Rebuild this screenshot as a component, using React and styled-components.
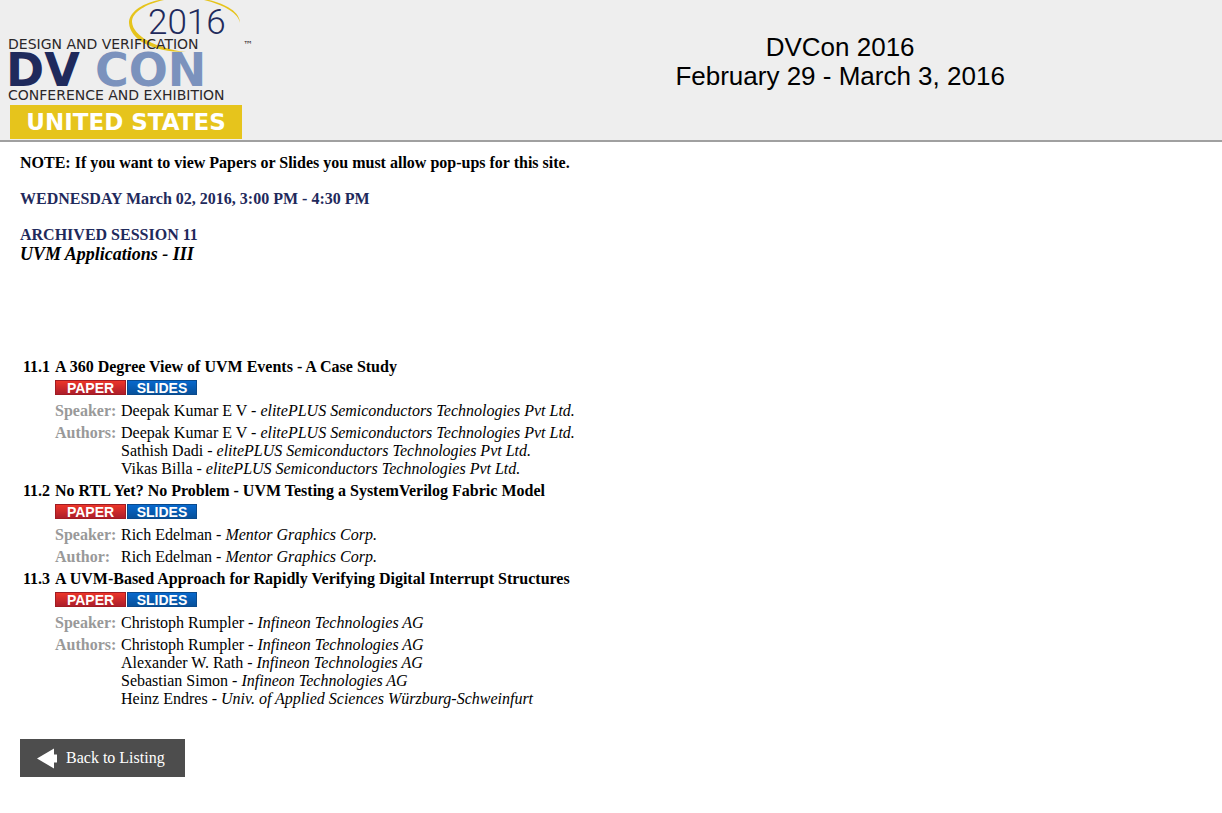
import React from 'react';
import styled, { createGlobalStyle } from 'styled-components';

const GlobalStyle = createGlobalStyle`
  body {
    margin: 0;
    background-color: #fff;
    color: #000;
    font-family: 'Liberation Serif', 'Times New Roman', serif;
    font-size: 16px;
    line-height: 18px;
  }
`;

const Header = styled.header`
  display: grid;
  grid-template-columns: 3fr 5fr;
  background-color: #eee;
  border-bottom: 2px solid #a0a0a0;
`;

const Logo = styled.svg`
  display: block;
  width: 260px;
  height: 140px;
`;

const HeaderTitle = styled.h1`
  margin: 0;
  padding-top: 33px;
  text-align: center;
  font-family: 'Liberation Sans', Arial, sans-serif;
  font-size: 26px;
  font-weight: normal;
  line-height: 29px;
`;

const Content = styled.main`
  padding: 12px 20px 36px;
`;

const Note = styled.p`
  margin: 0 0 18px;
  font-weight: bold;
`;

const SessionLine = styled.h2`
  margin: 0;
  padding-bottom: ${props => props.$spaced ? '18px' : '0'};
  color: #1f2a5c;
  font-size: 16px;
`;

const SessionTitle = styled.h3`
  margin: 0 0 92px;
  font-size: 18px;
  font-style: italic;
  line-height: 20px;
`;

const PaperTable = styled.table`
  border-collapse: collapse;
`;

const Cell = styled.td`
  padding: 2px 0;
  vertical-align: top;
  text-align: left;
`;

const NumberCell = styled(Cell)`
  min-width: 32px;
  padding-left: 3px;
  font-weight: bold;
`;

const TitleCell = styled(Cell)`
  font-weight: bold;
`;

const LabelCell = styled(Cell)`
  min-width: 66px;
  color: #999;
  font-weight: bold;
`;

const Badges = styled.div`
  display: flex;
  gap: 1px;
  height: 18px;
`;

const Badge = styled.a`
  box-sizing: border-box;
  width: ${props => props.$slides ? '70px' : '71px'};
  height: 15px;
  border: 1px solid ${props => props.$slides ? '#0a4a8c' : '#a01c22'};
  background: ${props => props.$slides
    ? 'linear-gradient(#0868cc, #07519b)'
    : 'linear-gradient(#ec3529, #ad1e2b)'};
  color: #fff;
  font-family: 'Liberation Sans', Arial, sans-serif;
  font-size: 14px;
  font-weight: bold;
  line-height: 14px;
  text-align: center;
  text-decoration: none;
`;

const BackLink = styled.a`
  display: inline-flex;
  align-items: center;
  gap: 8px;
  margin-top: 29px;
  padding: 10px 20px 10px 17px;
  background-color: #4d4d4d;
  color: #fff;
  text-decoration: none;
`;

const BackArrow = styled.svg`
  width: 21px;
  height: 18px;
  overflow: visible;
`;

const elite = 'elitePLUS Semiconductors Technologies Pvt Ltd.';
const mentor = 'Mentor Graphics Corp.';
const infineon = 'Infineon Technologies AG';

const papers = [
  {
    id: '11.1',
    title: 'A 360 Degree View of UVM Events - A Case Study',
    speaker: ['Deepak Kumar E V', elite],
    authors: [
      ['Deepak Kumar E V', elite],
      ['Sathish Dadi', elite],
      ['Vikas Billa', elite],
    ],
  },
  {
    id: '11.2',
    title: 'No RTL Yet? No Problem - UVM Testing a SystemVerilog Fabric Model',
    speaker: ['Rich Edelman', mentor],
    authors: [['Rich Edelman', mentor]],
  },
  {
    id: '11.3',
    title: 'A UVM-Based Approach for Rapidly Verifying Digital Interrupt Structures',
    speaker: ['Christoph Rumpler', infineon],
    authors: [
      ['Christoph Rumpler', infineon],
      ['Alexander W. Rath', infineon],
      ['Sebastian Simon', infineon],
      ['Heinz Endres', 'Univ. of Applied Sciences Würzburg-Schweinfurt'],
    ],
  },
];

const DvconLogo = () => (
  <Logo viewBox="0 0 260 140" role="img" aria-label="DVCon 2016 United States">
    <path
      d="M159 0 C140 4 129 13 129 23 C130 39 151 52 186 52 C155 48 133 36 132 22 C132 12 146 4 164 0 Z"
      fill="#e6c41c"
    />
    <path d="M209 0 C226 4 240 12 240 23 C239 14 225 5 204 0 Z" fill="#e6c41c" />
    <rect x="10" y="105" width="232" height="34" fill="#e6c41c" />
    <g fontFamily="'DejaVu Sans', Verdana, sans-serif">
      <text x="148" y="34" fontFamily="Roboto, sans-serif" fontSize="35" fontWeight="300" fill="#1f2a5c">2016</text>
      <text x="8" y="49" fontSize="14" fill="#2b2729">DESIGN AND VERIFICATION</text>
      <text x="243" y="48" fontSize="10" fill="#2b2729">™</text>
      <text x="6" y="86" fontSize="46" fontWeight="bold" fill="#1f2a5c">DV</text>
      <text x="95" y="86" fontSize="46" fontWeight="bold" fill="#7b92bd">CON</text>
      <text x="8" y="100" fontSize="14" fill="#2b2729">CONFERENCE AND EXHIBITION</text>
      <text x="126" y="130" fontSize="23" fontWeight="bold" fill="#fff" textAnchor="middle">UNITED STATES</text>
    </g>
  </Logo>
);

const Person = ({ person }) => (
  <div>{person[0]} - <i>{person[1]}</i></div>
);

const Paper = ({ paper }) => (
  <tbody>
    <tr>
      <NumberCell>{paper.id}</NumberCell>
      <TitleCell colSpan={2}>{paper.title}</TitleCell>
    </tr>
    <tr>
      <Cell />
      <Cell colSpan={2}>
        <Badges>
          <Badge href="#paper">PAPER</Badge>
          <Badge href="#slides" $slides>SLIDES</Badge>
        </Badges>
      </Cell>
    </tr>
    <tr>
      <Cell />
      <LabelCell as="th" scope="row">Speaker:</LabelCell>
      <Cell><Person person={paper.speaker} /></Cell>
    </tr>
    <tr>
      <Cell />
      <LabelCell as="th" scope="row">{paper.authors.length > 1 ? 'Authors:' : 'Author:'}</LabelCell>
      <Cell>
        {paper.authors.map(author => (
          <Person key={author[0]} person={author} />
        ))}
      </Cell>
    </tr>
  </tbody>
);

const App = () => {
  return (
    <>
      <GlobalStyle />
      <Header>
        <DvconLogo />
        <HeaderTitle>
          DVCon 2016<br />
          February 29 - March 3, 2016
        </HeaderTitle>
      </Header>
      <Content>
        <Note>NOTE: If you want to view Papers or Slides you must allow pop-ups for this site.</Note>
        <SessionLine $spaced>WEDNESDAY March 02, 2016, 3:00 PM - 4:30 PM</SessionLine>
        <SessionLine>ARCHIVED SESSION 11</SessionLine>
        <SessionTitle>UVM Applications - III</SessionTitle>
        <PaperTable>
          {papers.map(paper => (
            <Paper key={paper.id} paper={paper} />
          ))}
        </PaperTable>
        <BackLink href="#listing">
          <BackArrow viewBox="0 0 21 18" aria-hidden="true">
            <path d="M0 9.5 L17 -0.5 V5.5 H20 V13.5 H17 V19.5 Z" fill="#fff" />
          </BackArrow>
          Back to Listing
        </BackLink>
      </Content>
    </>
  );
};

export default App;
